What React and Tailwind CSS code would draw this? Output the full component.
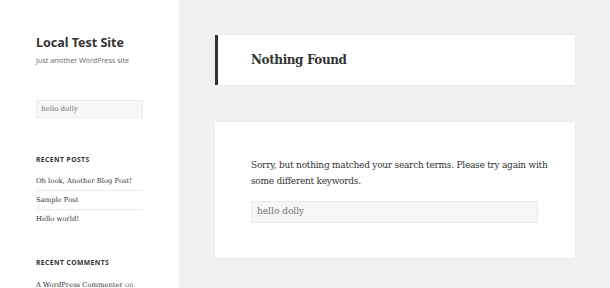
import React from "react";

const serif = { fontFamily: '"DejaVu Serif", "Liberation Serif", serif' };
const sans = { fontFamily: '"Noto Sans", "Open Sans", sans-serif' };

const RECENT = ["Oh look, Another Blog Post!", "Sample Post", "Hello world!"];

function SearchBox({ className }) {
  return (
    <div className={`border border-[#eaeaea] bg-[#f7f7f7] text-[#707070] flex items-center ${className}`} style={serif}>
      hello dolly
    </div>
  );
}

export default function App() {
  return (
    <div className="flex w-[610px] h-[288px] overflow-hidden bg-[#f1f1f1]">
      <aside className="w-[179px] shrink-0 bg-white pl-[36px] pr-[36px] pt-[34px]">
        <h1 className="text-[12.5px] font-bold text-[#333] leading-[18px]" style={sans}>Local Test Site</h1>
        <p className="text-[7.2px] text-[#707070] mt-[3px] leading-[10px]" style={sans}>Just another WordPress site</p>

        <SearchBox className="mt-[35px] h-[18px] w-[107px] text-[7px] pl-[4px]" />

        <div className="mt-[37px]">
          <h2 className="text-[6.8px] font-bold tracking-[0.06em] text-[#333] uppercase leading-[10px]" style={sans}>Recent Posts</h2>
          <ul className="mt-[11px] w-[107px]">
            {RECENT.map((t, i) => (
              <li key={t} className={`text-[6.8px] text-[#333] leading-[10px] pb-[4px] ${i < RECENT.length - 1 ? "border-b border-[#eaeaea] mb-[4px]" : ""}`} style={serif}>{t}</li>
            ))}
          </ul>
        </div>

        <div className="mt-[30px]">
          <h2 className="text-[6.8px] font-bold tracking-[0.06em] text-[#333] uppercase leading-[10px]" style={sans}>Recent Comments</h2>
          <p className="mt-[12px] text-[6.8px] text-[#333] whitespace-nowrap leading-[10px]" style={serif}>A WordPress Commenter <span className="text-[#707070]">on</span></p>
        </div>
      </aside>

      <main className="flex-1 pl-[36px] pt-[35px]">
        <header className="w-[360px] h-[50px] bg-white border-l-[3px] border-[#333] flex items-center pl-[33px] shadow-[0_0_1px_rgba(0,0,0,0.15)]">
          <h1 className="text-[12px] font-bold text-[#333] tracking-[-0.4px]" style={serif}>Nothing Found</h1>
        </header>

        <section className="mt-[37px] w-[360px] h-[136px] bg-white pl-[36px] pt-[35px] shadow-[0_0_1px_rgba(0,0,0,0.15)]">
          <p className="text-[9px] leading-[16px] text-[#333] w-[300px] tracking-[-0.25px]" style={serif}>
            Sorry, but nothing matched your search terms. Please try again with some different keywords.
          </p>
          <SearchBox className="mt-[12px] h-[22px] w-[287px] text-[9px] pl-[5px]" />
        </section>
      </main>
    </div>
  );
}
